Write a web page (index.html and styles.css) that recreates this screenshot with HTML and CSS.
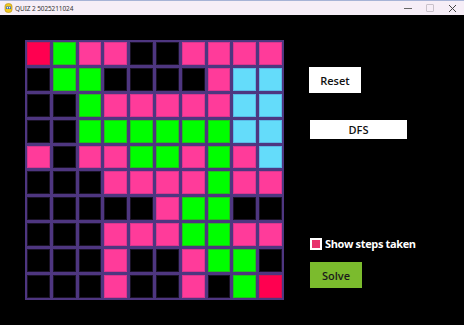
FILE: index.html
```html
<!DOCTYPE html>
<html>
<head>
<meta charset="utf-8">
<link rel="stylesheet" href="styles.css">
</head>
<body>
<div class="window">
  <div class="titlebar">
    <div class="title-left">
      <svg class="app-icon" width="9" height="10" viewBox="0 0 9 10">
        <path d="M1 3 Q1 0.5 4.5 0.5 Q8 0.5 8 3 L8 7 Q8 9.5 4.5 9.5 Q1 9.5 1 7 Z" fill="#f2c81f" stroke="#b08a10" stroke-width="0.6"/>
        <rect x="2" y="3.5" width="5" height="2.5" fill="#3b6fb3"/>
        <circle cx="3.4" cy="4.7" r="0.7" fill="#fff"/>
        <circle cx="5.6" cy="4.7" r="0.7" fill="#fff"/>
      </svg>
      <span class="title-text">QUIZ 2 5025211024</span>
    </div>
    <div class="controls">
      <span class="ctl ctl-min"></span>
      <span class="ctl ctl-max"></span>
      <svg class="ctl-close" width="9" height="9" viewBox="0 0 9 9"><path d="M1 1 L8 8 M8 1 L1 8" stroke="#444" stroke-width="1"/></svg>
    </div>
  </div>
  <div class="content">
    <div class="grid">
      <div class="c r"></div><div class="c g"></div><div class="c p"></div><div class="c p"></div><div class="c b"></div><div class="c b"></div><div class="c p"></div><div class="c p"></div><div class="c p"></div><div class="c p"></div>
      <div class="c b"></div><div class="c g"></div><div class="c g"></div><div class="c b"></div><div class="c b"></div><div class="c b"></div><div class="c b"></div><div class="c p"></div><div class="c y"></div><div class="c y"></div>
      <div class="c b"></div><div class="c b"></div><div class="c g"></div><div class="c p"></div><div class="c p"></div><div class="c p"></div><div class="c p"></div><div class="c p"></div><div class="c y"></div><div class="c y"></div>
      <div class="c b"></div><div class="c b"></div><div class="c g"></div><div class="c g"></div><div class="c g"></div><div class="c g"></div><div class="c g"></div><div class="c g"></div><div class="c y"></div><div class="c y"></div>
      <div class="c p"></div><div class="c b"></div><div class="c p"></div><div class="c p"></div><div class="c g"></div><div class="c g"></div><div class="c p"></div><div class="c g"></div><div class="c p"></div><div class="c y"></div>
      <div class="c b"></div><div class="c b"></div><div class="c b"></div><div class="c p"></div><div class="c p"></div><div class="c p"></div><div class="c p"></div><div class="c g"></div><div class="c p"></div><div class="c p"></div>
      <div class="c b"></div><div class="c b"></div><div class="c b"></div><div class="c b"></div><div class="c b"></div><div class="c p"></div><div class="c g"></div><div class="c g"></div><div class="c b"></div><div class="c b"></div>
      <div class="c b"></div><div class="c b"></div><div class="c b"></div><div class="c p"></div><div class="c p"></div><div class="c p"></div><div class="c g"></div><div class="c g"></div><div class="c p"></div><div class="c p"></div>
      <div class="c b"></div><div class="c b"></div><div class="c b"></div><div class="c p"></div><div class="c b"></div><div class="c b"></div><div class="c p"></div><div class="c g"></div><div class="c g"></div><div class="c b"></div>
      <div class="c b"></div><div class="c b"></div><div class="c b"></div><div class="c p"></div><div class="c b"></div><div class="c b"></div><div class="c p"></div><div class="c b"></div><div class="c g"></div><div class="c r"></div>
    </div>
    <div class="panel">
      <div class="btn btn-reset">Reset</div>
      <div class="btn btn-dfs">DFS</div>
      <div class="spacer"></div>
      <div class="check-row">
        <span class="checkbox"><span class="check-fill"></span></span>
        <span class="check-label">Show steps taken</span>
      </div>
      <div class="btn btn-solve">Solve</div>
    </div>
  </div>
</div>
</body>
</html>
```
FILE: styles.css
```css
html, body {
  margin: 0;
  padding: 0;
  background: #000;
  width: 464px;
  height: 325px;
  overflow: hidden;
  font-family: "Open Sans", "Noto Sans", sans-serif;
}
.window {
  width: 464px;
  height: 325px;
  display: flex;
  flex-direction: column;
}
.titlebar {
  height: 15px;
  background: #f6eef7;
  border-top: 1px solid #a7b3d6;
  box-sizing: border-box;
  display: flex;
  align-items: center;
  justify-content: space-between;
}
.title-left {
  display: flex;
  align-items: center;
  padding-left: 4px;
  gap: 2px;
}
.title-text {
  font-family: "Noto Sans", sans-serif;
  font-size: 6.5px;
  color: #333;
  letter-spacing: -0.1px;
}
.controls {
  display: flex;
  align-items: center;
  gap: 14px;
  padding-right: 7px;
}
.ctl-min {
  width: 8px;
  height: 1px;
  background: #666;
}
.ctl-max {
  width: 6px;
  height: 6px;
  border: 1px solid #c9c2cb;
  border-radius: 1px;
}
.content {
  flex: 1;
  display: flex;
  align-items: flex-start;
}
.grid {
  margin-left: 25px;
  margin-top: 25px;
  padding: 2px;
  background: #4e3680;
  display: grid;
  grid-template-columns: repeat(10, 22.8px);
  grid-template-rows: repeat(10, 22.9px);
  gap: 3px;
}
.c {
  box-sizing: border-box;
  border: 1px solid rgba(60, 40, 90, 0.55);
}
.b { background: #000; border-color: #1a1228; }
.g { background: #00ff00; border-color: #22c01a; }
.p { background: #ff3b9a; border-color: #d9378f; }
.y { background: #64dcfa; border-color: #5bb8e6; }
.r { background: #ff0050; border-color: #d9104e; }
.panel {
  margin-left: 25px;
  margin-top: 52px;
  display: flex;
  flex-direction: column;
  align-items: flex-start;
}
.btn {
  display: flex;
  align-items: center;
  justify-content: center;
  color: #111;
  font-weight: 600;
  font-size: 11px;
}
.btn-reset {
  width: 52px;
  height: 26px;
  background: #fff;
}
.btn-dfs {
  margin-top: 27px;
  margin-left: 1px;
  width: 97px;
  height: 19px;
  background: #fff;
}
.spacer {
  height: 97px;
}
.check-row {
  display: flex;
  align-items: center;
  margin-left: 1px;
  gap: 3px;
}
.checkbox {
  width: 12px;
  height: 12px;
  background: #fff;
  display: flex;
  align-items: center;
  justify-content: center;
}
.check-fill {
  width: 8px;
  height: 8px;
  background: #e8336e;
}
.check-label {
  color: #fff;
  font-weight: 700;
  font-size: 11px;
  letter-spacing: -0.35px;
}
.btn-solve {
  margin-top: 11px;
  margin-left: 1px;
  width: 52px;
  height: 26px;
  background: #7bbb2d;
  color: #1a1a1a;
}
```
